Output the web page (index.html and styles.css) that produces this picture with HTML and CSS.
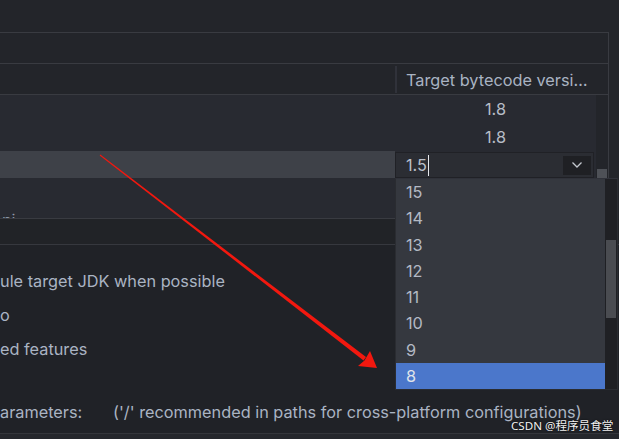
FILE: index.html
```html
<!DOCTYPE html>
<html>
<head>
<meta charset="utf-8">
<link rel="stylesheet" href="styles.css">
</head>
<body>
<div class="screen">
  <div class="topbar"></div>
  <div class="panel">
    <div class="tb"></div>
    <div class="hdr">
      <div class="hl"></div>
      <div class="hr">Target bytecode versi…</div>
    </div>
    <div class="bodywrap">
      <div class="tbl">
        <div class="row r28"><div class="c1"></div><div class="c2">1.8</div></div>
        <div class="row r28"><div class="c1"></div><div class="c2">1.8</div></div>
        <div class="row sel">
          <div class="c1"></div>
          <div class="editor">
            <span class="val">1.5</span><span class="caret"></span>
            <span class="btn"><svg width="12" height="8" viewBox="0 0 12 8"><path d="M1.5 1.5 L6 6 L10.5 1.5" fill="none" stroke="#c3c7ce" stroke-width="1.3"/></svg></span>
          </div>
        </div>
        <div class="row empty"></div>
        <div class="row clip"><div class="frag">ni</div></div>
      </div>
      <div class="vs"><div class="mini"></div></div>
    </div>
  </div>
  <div class="band"></div>
  <div class="opts">
    <div class="opt">ule target JDK when possible</div>
    <div class="opt">o</div>
    <div class="opt">ed features</div>
    <div class="params"><span class="plabel">arameters:</span><span class="hint">('/' recommended in paths for cross-platform configurations)</span></div>
  </div>
  <div class="foot"></div>

  <div class="popup">
    <div class="list">
      <div class="item">15</div>
      <div class="item">14</div>
      <div class="item">13</div>
      <div class="item">12</div>
      <div class="item">11</div>
      <div class="item">10</div>
      <div class="item">9</div>
      <div class="item active">8</div>
    </div>
    <div class="track"><div class="thumb"></div></div>
  </div>

  <svg class="arrow" width="619" height="439" viewBox="0 0 619 439">
    <polygon points="99.7,155.4 100.3,154.6 366,357 363.5,360.5" fill="#f2180f"/>
    <polygon points="377,368 358,366 364.5,360.5 370,351" fill="#f2180f"/>
  </svg>

  <div class="wm">CSDN @程序员食堂</div>
</div>
</body>
</html>
```

FILE: styles.css
```css
* { box-sizing: border-box; }
html, body { margin: 0; padding: 0; }
body {
  background: #23252a;
  font-family: Inter, "Noto Sans", "Noto Sans CJK SC", sans-serif;
  font-size: 16.3px;
  color: #aab4c3;
}
.screen {
  position: relative;
  width: 619px;
  height: 439px;
  overflow: hidden;
  background: #23252a;
}
.topbar { height: 32px; }
.panel {
  width: 609px;
  border-top: 1px solid #393b41;
  border-right: 1px solid #393b41;
  border-bottom: 1px solid #393b41;
  display: flex;
  flex-direction: column;
}
.tb {
  height: 31px;
  border-bottom: 1px solid #393b41;
}
.hdr {
  height: 31px;
  display: flex;
  border-bottom: 1px solid #393b41;
}
.hl { width: 395px; }
.hr {
  flex: 1;
  margin: 2px 0 1px;
  border-left: 2px solid #30323a;
  padding-left: 9px;
  display: flex;
  align-items: center;
  color: #a9b3c2;
  white-space: nowrap;
  overflow: hidden;
}
.bodywrap {
  height: 123px;
  display: flex;
}
.tbl {
  width: 596px;
  background: #282a31;
  overflow: hidden;
}
.row { display: flex; }
.r28 { height: 28px; }
.c1 { width: 395px; }
.c2 {
  flex: 1;
  display: flex;
  align-items: center;
  justify-content: center;
  color: #b6bcc6;
}
.sel { height: 27px; }
.sel .c1 { background: #3e4148; }
.editor {
  flex: 1;
  margin: 1px 2px 0 0;
  border: 1px solid #202126;
  background: #2b2d33;
  display: flex;
  align-items: center;
  padding-left: 10px;
  padding-right: 2px;
}
.val { color: #b9bfc9; }
.caret {
  width: 1px;
  height: 21px;
  background: #e6e8ec;
  margin-left: 1px;
}
.btn {
  margin-left: auto;
  width: 28px;
  height: 19px;
  background: #1f2024;
  display: flex;
  align-items: center;
  justify-content: center;
}
.empty { height: 27px; }
.clip {
  height: 30px;
  align-items: center;
}
.frag { padding-left: 2px; color: #8b96a6; }
.vs {
  flex: 1;
  padding-top: 74px;
}
.mini {
  width: 10px;
  height: 9px;
  margin-left: 1px;
  background: #4e5157;
}
.band {
  height: 26px;
  background: #212327;
  border-bottom: 1px solid #36383e;
}
.opts {
  height: 188px;
  background: #202227;
  padding-top: 19px;
}
.opt {
  height: 34px;
  display: flex;
  align-items: center;
  white-space: nowrap;
}
.params {
  margin-top: 29px;
  height: 34px;
  display: flex;
  align-items: center;
  white-space: nowrap;
}
.plabel { width: 113px; }
.foot {
  height: 6px;
  border-top: 1px solid #34363b;
  background: #25272c;
}
.popup {
  position: absolute;
  left: 395px;
  top: 178px;
  width: 223px;
  height: 212px;
  display: flex;
  border: 1px solid #2a2c31;
  border-top-color: #30323a;
}
.list {
  width: 209px;
  background: #35383f;
  display: flex;
  flex-direction: column;
}
.item {
  height: 26.3px;
  display: flex;
  align-items: center;
  padding-left: 10px;
  color: #b3b9c4;
}
.item.active {
  background: #4b77cb;
  color: #dfe3ea;
}
.track {
  flex: 1;
  background: #1f2024;
  padding-top: 61px;
}
.thumb {
  width: 10px;
  height: 78px;
  margin-left: 1px;
  background: #4a4c51;
}
.arrow {
  position: absolute;
  left: 0;
  top: 0;
  pointer-events: none;
}
.wm {
  position: absolute;
  left: 511px;
  top: 420px;
  font-size: 11.6px;
  line-height: 12px;
  color: #f2f2f2;
  text-shadow: 0 0 2px #000;
  font-family: "Noto Sans", "Noto Sans CJK SC", sans-serif;
  white-space: nowrap;
}
```
